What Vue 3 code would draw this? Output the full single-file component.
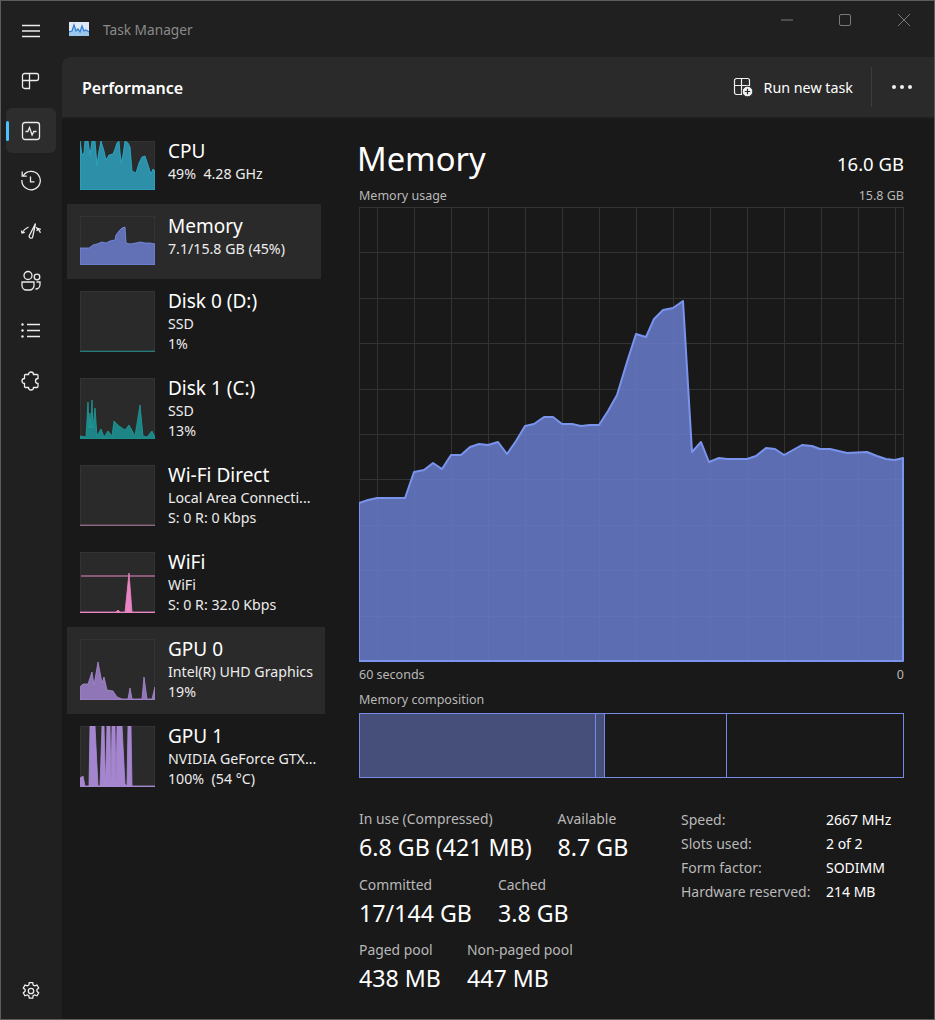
<script setup>
import { computed } from 'vue'

const toPoints = (list) => list.map(p => p.join(',')).join(' ')

// closes a line along the bottom of the thumbnail
const area = (list, w, h) => toPoints([[0, h], ...list, [w, h]])

const cols = Array.from({ length: 15 }, (_, i) => 18 + i * 37)
const rows = Array.from({ length: 11 }, (_, i) => i * 45.4)

const usage = [
  [0, 296], [9, 293], [18, 291], [46, 291], [55, 265], [65, 263], [74, 256], [83, 262], [92, 248], [102, 248],
  [111, 240], [120, 237], [129, 238], [139, 235], [148, 247], [157, 234], [166, 219], [175, 217], [185, 210], [194, 210],
  [203, 217], [213, 217], [222, 219], [231, 218], [240, 218], [249, 204], [258, 188], [268, 155], [277, 127], [287, 130],
  [295, 112], [304, 103], [314, 101], [324, 94], [333, 245], [342, 235], [350, 255], [360, 251], [368, 252], [388, 252],
  [397, 249], [407, 241], [416, 242], [425, 248], [443, 238], [453, 239], [461, 242], [471, 242], [488, 246], [508, 245],
  [518, 249], [527, 252], [536, 253], [544, 251]
]
const usageArea = computed(() => area(usage, 544, 454))

const items = [
  {
    name: 'CPU', lines: ['49%\u00a0\u00a04.28 GHz'], h: 49, fill: '#2e8fa8', line: '#2bb3d3', selected: '',
    data: [[0, 0], [2, 14], [4, 12], [5, 0], [8, 0], [10, 14], [12, 0], [15, 0], [17, 24], [19, 10], [21, 0], [24, 10], [26, 19], [29, 14], [33, 13], [35, 8], [37, 2], [39, 0], [41, 22], [43, 14], [45, 0], [48, 2], [50, 6], [52, 30], [56, 32], [59, 22], [62, 16], [65, 15], [68, 24], [71, 33], [73, 28], [75, 30]]
  },
  {
    name: 'Memory', lines: ['7.1/15.8 GB (45%)'], h: 49, fill: '#6270b6', line: '#7a92ee', selected: 'selected',
    data: [[0, 32], [9, 32], [13, 29], [17, 28], [22, 26], [26, 27], [30, 25], [35, 24], [36, 19], [39, 15], [42, 12], [45, 11], [46, 27], [50, 28], [56, 27], [60, 26], [65, 27], [70, 27], [75, 28]]
  },
  {
    name: 'Disk 0 (D:)', lines: ['SSD', '1%'], h: 61, fill: '#1f8f8f', line: '#2b6f6c', selected: '',
    data: [[0, 60], [75, 60]]
  },
  {
    name: 'Disk 1 (C:)', lines: ['SSD', '13%'], h: 61, fill: '#1d8585', line: '#1f9c9c', selected: '',
    data: [[0, 58], [6, 59], [8, 24], [9, 50], [10, 35], [11, 50], [12, 22], [13, 50], [15, 30], [17, 58], [21, 51], [24, 59], [28, 53], [32, 58], [34, 43], [39, 48], [45, 52], [49, 47], [55, 58], [60, 27], [63, 58], [67, 59], [72, 53], [75, 59]]
  },
  {
    name: 'Wi-Fi Direct', lines: ['Local Area Connecti...', 'S: 0 R: 0 Kbps'], h: 61, fill: '#8f6a84', line: '#8f6a84', selected: '',
    data: [[0, 60], [75, 60]]
  },
  {
    name: 'WiFi', lines: ['WiFi', 'S: 0 R: 32.0 Kbps'], h: 61, fill: '#e985c4', line: '#e985c4', selected: '', level: 24,
    data: [[0, 60], [36, 60], [38, 58], [40, 60], [45, 60], [49, 21], [52, 60], [75, 60]]
  },
  {
    name: 'GPU 0', lines: ['Intel(R) UHD Graphics', '19%'], h: 61, fill: '#8f76b6', line: '#a98bd2', selected: 'selected wide',
    data: [[0, 48], [3, 45], [8, 45], [12, 33], [14, 46], [18, 23], [22, 44], [24, 38], [27, 51], [33, 52], [37, 58], [42, 60], [48, 60], [50, 49], [52, 60], [62, 60], [64, 38], [67, 60], [72, 60], [75, 48]]
  },
  {
    name: 'GPU 1', lines: ['NVIDIA GeForce GTX...', '100%\u00a0\u00a0(54 °C)'], h: 61, fill: '#a585d0', line: '#a98bd2', selected: '',
    data: [[0, 52], [3, 50], [5, 60], [9, 60], [10, 0], [15, 0], [18, 60], [20, 60], [22, 0], [24, 0], [25.5, 60], [27, 0], [30, 0], [31, 60], [32, 0], [35, 0], [36, 60], [37, 0], [42, 0], [45, 58], [47, 60], [48, 0], [51, 0], [52, 60], [75, 60]]
  }
]

const segments = [
  { width: 236, cls: 'used' },
  { width: 9, cls: 'used' },
  { width: 122, cls: '' }
]

const stats = [
  [{ label: 'In use (Compressed)', value: '6.8 GB (421 MB)' }, { label: 'Available', value: '8.7 GB' }],
  [{ label: 'Committed', value: '17/144 GB' }, { label: 'Cached', value: '3.8 GB' }],
  [{ label: 'Paged pool', value: '438 MB' }, { label: 'Non-paged pool', value: '447 MB' }]
]

const specs = [
  ['Speed:', '2667 MHz'],
  ['Slots used:', '2 of 2'],
  ['Form factor:', 'SODIMM'],
  ['Hardware reserved:', '214 MB']
]
</script>

<template>
  <div class="window">
    <nav class="rail">
      <button class="rail-btn">
        <svg width="20" height="20" viewBox="0 0 20 20"><path d="M1 4.500h18M1 10h18M1 15.500h18" /></svg>
      </button>
      <button class="rail-btn">
        <svg width="20" height="20" viewBox="0 0 20 20"><path d="M3.500 2.500h5v7h-7v-5a2 2 0 0 1 2-2zM8.500 2.500h7a2 2 0 0 1 2 2v3a2 2 0 0 1-2 2h-7zM1.500 9.500h7v8h-5a2 2 0 0 1-2-2z" /></svg>
      </button>
      <button class="rail-btn active">
        <svg width="20" height="20" viewBox="0 0 20 20"><rect x="1.500" y="1.500" width="17" height="17" rx="2.500" /><path d="M4.500 10.500h2.300l1.700-4 2.600 7.500 1.700-3.500h2.700" /></svg>
      </button>
      <button class="rail-btn">
        <svg width="22" height="22" viewBox="0 0 22 22"><path d="M3.200 5.800A9.200 9.200 0 1 1 1.900 10" /><path d="M2.200 1.600v4.600h4.600M10.500 6.500v5.300h4" /></svg>
      </button>
      <button class="rail-btn">
        <svg width="22" height="22" viewBox="0 0 22 22"><path d="M2 13C3.500 10.300 5.500 8.300 8.500 7M16 7.300c2 1 3.500 3 4.500 5.500" /><path d="M1.500 10.500 2 13l2.800-.6M16.800 11 18 8.500l2.800.9" /><path d="M15.500 3.500 12.700 16.800a1.800 1.800 0 0 1-3.500-.9z" /></svg>
      </button>
      <button class="rail-btn">
        <svg width="22" height="22" viewBox="0 0 22 22"><circle cx="8" cy="5.500" r="4" /><circle cx="17" cy="7" r="2.800" /><path d="M2 12h12v3.500a4.500 4.500 0 0 1-4.500 4.500h-3A4.500 4.500 0 0 1 2 15.500zM16.500 12H20v2.500a4.500 4.500 0 0 1-4.500 4.500" /></svg>
      </button>
      <button class="rail-btn">
        <svg width="22" height="22" viewBox="0 0 22 22"><path d="M7 4.500h13M7 10.500h13M7 16.500h13" /><circle class="solid" cx="2.500" cy="4.500" r="1.200" /><circle class="solid" cx="2.500" cy="10.500" r="1.200" /><circle class="solid" cx="2.500" cy="16.500" r="1.200" /></svg>
      </button>
      <button class="rail-btn">
        <svg width="22" height="22" viewBox="0 0 22 22"><path d="M8.500 4.500a2.500 2.500 0 1 1 5 0H17a1 1 0 0 1 1 1v3a2.500 2.500 0 0 0 0 5v3a1 1 0 0 1-1 1h-3.500a2.500 2.500 0 1 1-5 0H5.500a1 1 0 0 1-1-1v-3a2.500 2.500 0 1 1 0-5v-3a1 1 0 0 1 1-1z" /></svg>
      </button>
      <button class="rail-btn settings">
        <svg width="20" height="20" viewBox="0 0 20 20"><circle cx="10" cy="10" r="2.700" /><path d="M8.300 1.700h3.400l.5 2.400 1.500.8 2.300-.8 1.700 2.900-1.800 1.600v1.700l1.800 1.600-1.700 2.900-2.300-.8-1.500.8-.5 2.400H8.300l-.5-2.400-1.500-.8-2.300.8-1.700-2.900 1.800-1.600V8.600L2.300 7l1.700-2.900 2.300.8 1.500-.8z" /></svg>
      </button>
    </nav>

    <div class="body">
      <header class="titlebar">
        <svg class="app-icon" width="20" height="14" viewBox="0 0 20 14">
          <rect width="20" height="14" fill="#dfe9f5" />
          <path d="M0 10 3 9 5 3 7 9 9 7 11 10 13 4 15 9 17 8 20 10V14H0z" fill="#9cc7ec" />
          <path d="M0 10 3 9 5 3 7 9 9 7 11 10 13 4 15 9 17 8 20 10" fill="none" stroke="#2b7cd3" stroke-width="1.200" />
        </svg>
        <span class="app-title">Task Manager</span>
        <div class="controls">
          <button class="ctl"><svg width="12" height="12" viewBox="0 0 12 12"><path d="M0 6h12" /></svg></button>
          <button class="ctl"><svg width="12" height="12" viewBox="0 0 12 12"><rect x=".5" y=".5" width="11" height="11" rx="1.500" /></svg></button>
          <button class="ctl"><svg width="12" height="12" viewBox="0 0 12 12"><path d="M0 0l12 12M12 0 0 12" /></svg></button>
        </div>
      </header>

      <main class="panel">
        <div class="panel-head">
          <h1>Performance</h1>
          <div class="actions">
            <button class="run">
              <svg width="20" height="20" viewBox="0 0 20 20">
                <path d="M8.500 1.500h-5a2 2 0 0 0-2 2v5h7zM8.500 1.500h6a2 2 0 0 1 2 2v5h-8zM1.500 8.500h7v9h-5a2 2 0 0 1-2-2z" fill="none" stroke="#f0f0f0" stroke-width="1.200" />
                <circle cx="14.500" cy="14.500" r="5.300" fill="#f0f0f0" stroke="#2a2a2a" />
                <path d="M14.500 11.800v5.400M11.800 14.500h5.400" stroke="#2a2a2a" stroke-width="1.200" />
              </svg>
              <span>Run new task</span>
            </button>
            <span class="divider"></span>
            <button class="more"><i></i><i></i><i></i></button>
          </div>
        </div>

        <div class="content">
          <aside class="list">
            <div v-for="item in items" :key="item.name" class="perf-item" :class="item.selected">
              <svg class="thumb" width="75" :height="item.h" :viewBox="`0 0 75 ${item.h}`">
                <line v-if="item.level" x1="1" x2="75" :y1="item.level" :y2="item.level" :stroke="item.line" stroke-width="1" />
                <polygon :points="area(item.data, 75, item.h)" :fill="item.fill" :stroke="item.line" stroke-width="0.8" />
              </svg>
              <div class="perf-text">
                <div class="perf-name">{{ item.name }}</div>
                <div v-for="line in item.lines" :key="line" class="perf-line">{{ line }}</div>
              </div>
            </div>
          </aside>

          <section class="detail">
            <div class="detail-head">
              <h2>Memory</h2>
              <span class="total">16.0 GB</span>
            </div>
            <div class="caption">
              <span>Memory usage</span>
              <span>15.8 GB</span>
            </div>
            <svg class="graph" width="545" height="455" viewBox="0 0 545 455">
              <g stroke="#333333" stroke-width="1" shape-rendering="crispEdges">
                <line v-for="y in rows" :key="y" x1="0" x2="544" :y1="y + 0.5" :y2="y + 0.5" />
                <line v-for="x in cols" :key="x" :x1="x + 0.5" :x2="x + 0.5" y1="0" y2="454" />
                <line x1="0.5" x2="0.5" y1="0" y2="454" />
                <line x1="544.5" x2="544.5" y1="0" y2="454" />
              </g>
              <polygon :points="usageArea" fill="#6a7cce" fill-opacity="0.85" stroke="#7a94ee" stroke-width="2" stroke-linejoin="round" />
            </svg>
            <div class="caption axis">
              <span>60 seconds</span>
              <span>0</span>
            </div>
            <div class="caption comp-label">
              <span>Memory composition</span>
            </div>
            <div class="composition">
              <div v-for="(seg, i) in segments" :key="i" class="segment" :class="seg.cls" :style="{ width: seg.width + 'px' }"></div>
            </div>

            <div class="stats">
              <div class="stats-left">
                <div v-for="(row, i) in stats" :key="i" class="stat-row">
                  <div v-for="stat in row" :key="stat.label" class="stat">
                    <div class="stat-label">{{ stat.label }}</div>
                    <div class="stat-value">{{ stat.value }}</div>
                  </div>
                </div>
              </div>
              <div class="specs">
                <template v-for="spec in specs" :key="spec[0]">
                  <span class="spec-label">{{ spec[0] }}</span>
                  <span class="spec-value">{{ spec[1] }}</span>
                </template>
              </div>
            </div>
          </section>
        </div>
      </main>
    </div>
  </div>
</template>

<style scoped>
.window {
  width: 935px;
  height: 1020px;
  box-sizing: border-box;
  display: flex;
  background: #202020;
  border: 1px solid #5c5c5c;
  color: #fff;
  font-family: "Noto Sans", "Open Sans", sans-serif;
  overflow: hidden;
}
button {
  background: none;
  border: 0;
  padding: 0;
  color: inherit;
  font: inherit;
}
.rail {
  width: 61px;
  flex: none;
  display: flex;
  flex-direction: column;
  gap: 5px;
  padding: 7px 0 6px 5px;
  box-sizing: border-box;
}
.rail-btn {
  position: relative;
  width: 50px;
  height: 45px;
  flex: none;
  display: flex;
  align-items: center;
  justify-content: center;
  border-radius: 6px;
}
.rail-btn svg {
  fill: none;
  stroke: #ececec;
  stroke-width: 1.3;
}
.rail-btn svg .solid {
  fill: #ececec;
  stroke: none;
}
.rail-btn.active {
  background: #2d2d2d;
}
.rail-btn.active::before {
  content: "";
  position: absolute;
  left: 0;
  top: 13px;
  width: 3px;
  height: 20px;
  border-radius: 2px;
  background: #4cc2ff;
}
.settings {
  margin-top: auto;
}
.body {
  flex: 1;
  min-width: 0;
  display: flex;
  flex-direction: column;
}
.titlebar {
  height: 56px;
  flex: none;
  display: flex;
  align-items: flex-start;
  padding-left: 7px;
}
.app-icon {
  margin-top: 21px;
}
.app-title {
  margin: 19px 0 0 14px;
  font-size: 13.700px;
  line-height: 19px;
  color: #8a8a8a;
}
.controls {
  margin-left: auto;
  margin-right: 1px;
  display: flex;
}
.ctl {
  width: 58.500px;
  height: 38px;
  display: flex;
  align-items: center;
  justify-content: center;
}
.ctl svg {
  fill: none;
  stroke: #7a7a7a;
  stroke-width: 1;
}
.panel {
  flex: 1;
  min-height: 0;
  display: flex;
  flex-direction: column;
  background: #191919;
  border-top-left-radius: 8px;
  overflow: hidden;
}
.panel-head {
  height: 60px;
  flex: none;
  display: flex;
  align-items: center;
  justify-content: space-between;
  background: #2a2a2a;
  border-bottom: 2px solid #1f1f1f;
  padding: 0 22px 0 20px;
}
h1 {
  margin: 2px 0 0;
  font-size: 16px;
  font-weight: 600;
}
.actions {
  display: flex;
  align-items: center;
}
.run {
  display: flex;
  align-items: center;
  gap: 10px;
  font-size: 14.300px;
}
.divider {
  width: 1px;
  height: 40px;
  background: #3c3c3c;
  margin: 0 20px 0 18px;
}
.more {
  display: flex;
  gap: 4px;
  width: 20px;
}
.more i {
  width: 4px;
  height: 4px;
  border-radius: 50%;
  background: #f0f0f0;
}
.content {
  flex: 1;
  min-height: 0;
  display: flex;
}
.list {
  width: 265px;
  flex: none;
  box-sizing: border-box;
  padding: 10px 0 0 5px;
}
.perf-item {
  width: 254px;
  display: flex;
  align-items: flex-start;
  box-sizing: border-box;
  padding: 12px 0 14px 13px;
}
.perf-item.selected {
  background: #2a2a2a;
}
.perf-item.wide {
  width: 258px;
}
.thumb {
  flex: none;
  background: #2a2a2a;
  box-shadow: inset 0 0 0 1px #333;
}
.perf-text {
  margin: -2px 0 -3px 13px;
  white-space: nowrap;
}
.perf-name {
  font-size: 19px;
  line-height: 25px;
}
.perf-line {
  font-size: 14.200px;
  line-height: 20px;
  color: #ececec;
}
.detail {
  flex: 1;
  min-width: 0;
  box-sizing: border-box;
  padding: 18px 30px 0 32px;
}
.detail-head {
  height: 51px;
  display: flex;
  align-items: flex-start;
  justify-content: space-between;
}
h2 {
  margin: 0 0 0 -2px;
  font-size: 32.700px;
  line-height: 44px;
  font-weight: 400;
}
.total {
  margin-top: 14px;
  font-size: 18.500px;
  line-height: 26px;
}
.caption {
  display: flex;
  justify-content: space-between;
  font-size: 12.500px;
  line-height: 16px;
  color: #b8b8b8;
}
.graph {
  display: block;
  margin-top: 3px;
}
.axis {
  margin-top: 5px;
}
.comp-label {
  margin-top: 9px;
}
.composition {
  margin-top: 5px;
  height: 65px;
  box-sizing: border-box;
  border: 1px solid #7488e4;
  display: flex;
}
.segment {
  box-sizing: border-box;
  border-right: 1px solid #7488e4;
}
.segment.used {
  background: #454f7a;
}
.stats {
  margin-top: 31px;
  display: flex;
}
.stats-left {
  width: 322px;
  flex: none;
  display: flex;
  flex-direction: column;
  gap: 11.500px;
}
.stat-row {
  display: flex;
  gap: 26px;
}
.stat-label {
  font-size: 13.900px;
  line-height: 20px;
  color: #b8b8b8;
}
.stat-value {
  margin-top: 2px;
  font-size: 23.200px;
  line-height: 32px;
}
.specs {
  margin-top: -1px;
  display: grid;
  grid-template-columns: 145px auto;
  grid-auto-rows: 24px;
  font-size: 14px;
  line-height: 24px;
}
.spec-label {
  color: #b8b8b8;
}
</style>
